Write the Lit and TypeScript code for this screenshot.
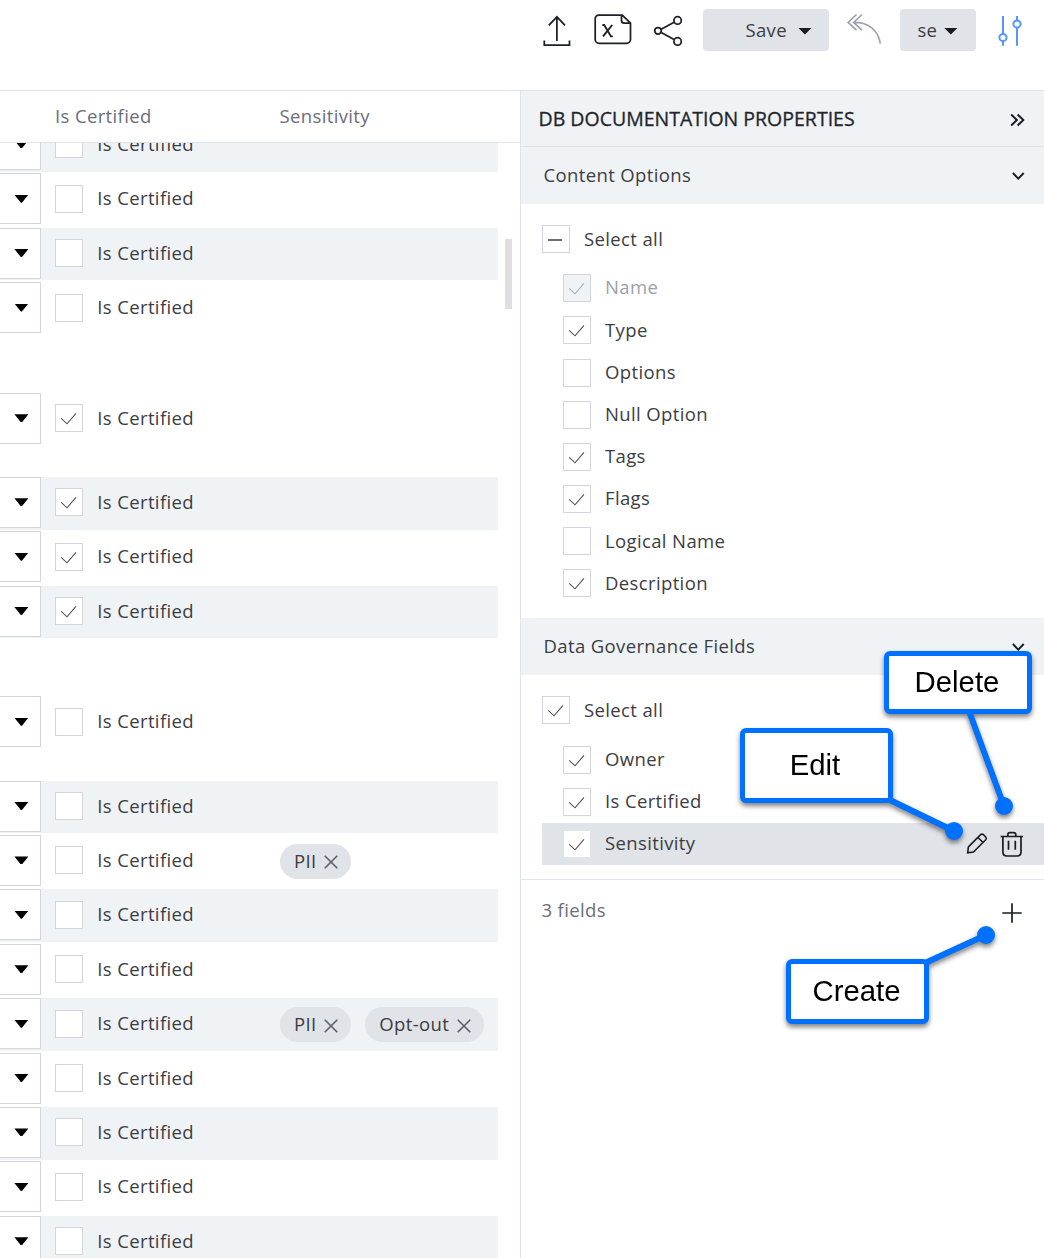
import { LitElement, html, css, svg, nothing } from "lit";
import { customElement, property } from "lit/decorators.js";
import { classMap } from "lit/directives/class-map.js";

type CheckState = "on" | "off" | "mixed";

interface TableRow {
  certified: boolean;
  striped?: boolean;
  tags?: string[];
  /** Extra space under the row, where a group heading sits further left. */
  space?: number;
}

const ROWS: TableRow[] = [
  { certified: false, striped: true },
  { certified: false },
  { certified: false, striped: true },
  { certified: false, space: 56.4 },
  { certified: true, space: 29.5 },
  { certified: true, striped: true },
  { certified: true },
  { certified: true, striped: true, space: 56.2 },
  { certified: false, space: 30 },
  { certified: false, striped: true },
  { certified: false, tags: ["PII"] },
  { certified: false, striped: true },
  { certified: false },
  { certified: false, striped: true, tags: ["PII", "Opt-out"] },
  { certified: false },
  { certified: false, striped: true },
  { certified: false },
  { certified: false, striped: true },
];

interface Option {
  label: string;
  state: CheckState;
  disabled?: boolean;
  active?: boolean;
}

const CONTENT: Option[] = [
  { label: "Name", state: "on", disabled: true },
  { label: "Type", state: "on" },
  { label: "Options", state: "off" },
  { label: "Null Option", state: "off" },
  { label: "Tags", state: "on" },
  { label: "Flags", state: "on" },
  { label: "Logical Name", state: "off" },
  { label: "Description", state: "on" },
];

const GOVERNANCE: Option[] = [
  { label: "Owner", state: "on" },
  { label: "Is Certified", state: "on" },
  { label: "Sensitivity", state: "on", active: true },
];

@customElement("check-box")
class CheckBox extends LitElement {
  @property() state: CheckState = "off";
  @property({ type: Boolean }) disabled = false;
  @property({ type: Boolean }) plain = false;

  static styles = css`
    :host { display: block; flex: none; width: 28px; height: 28px; }
    .box { box-sizing: border-box; width: 28px; height: 28px; border: 1px solid #d3d5db; background: #fff; }
    .disabled { background: #eff3f6; }
    .plain { border-color: #e0e3e8; }
    svg { display: block; width: 26px; height: 26px; fill: none; stroke: #505055; stroke-width: 1.05; }
    .disabled svg { stroke: #a9abb2; }
    .mixed svg { stroke: #6d6d72; stroke-width: 2; }
  `;

  render() {
    const mark =
      this.state === "on" ? svg`<path d="M5.2 13.4L11 18.8L20 8.3" />`
      : this.state === "mixed" ? svg`<path d="M5 14H19" />`
      : nothing;
    return html`<div class=${classMap({ box: true, disabled: this.disabled, plain: this.plain, mixed: this.state === "mixed" })}>
      <svg viewBox="0 0 26 26">${mark}</svg>
    </div>`;
  }
}

@customElement("tool-bar")
class ToolBar extends LitElement {
  static styles = css`
    :host { display: flex; height: 90px; box-sizing: border-box; padding: 9px 0 0 536px; align-items: flex-start; }
    svg { display: block; flex: none; fill: none; stroke: #1f2027; stroke-width: 1.75; }
    .btn { box-sizing: border-box; flex: none; display: flex; align-items: center; height: 42px; border-radius: 4px; background: #e0e3e8; font-size: 18.5px; color: #3c3d43; padding-bottom: 2px; }
    .save { width: 126px; margin-left: 9px; padding-left: 42.4px; }
    .base { width: 76px; margin-left: 12px; padding-left: 17.4px; }
    .caret { width: 14px; height: 7px; margin: 4px 0 0 11px; background: #1b1c22; clip-path: polygon(0 0, 100% 0, 50% 100%); }
    .base .caret { margin-left: 6.5px; }
    .undo { margin-left: 13px; stroke: #9ca0aa; stroke-width: 1.6; }
    .tune { margin-left: 14px; stroke: #5596ff; stroke-width: 2; }
  `;

  render() {
    return html`
      <svg width="46" height="42" viewBox="536 9 46 42"><path d="M556.9 41V17M548.8 25.4L556.9 16.8L565 25.4M544.3 40.6V45H569.5V40.6" /></svg>
      <svg width="62" height="42" viewBox="582 9 62 42">
        <path d="M599 15.1H622.3L630.5 23.2V39.4A4 4 0 0 1 626.5 43.3H599A3.8 3.8 0 0 1 595.2 39.5V18.9A3.8 3.8 0 0 1 599 15.1ZM621.5 15V20.5A2.7 2.7 0 0 0 624.2 23.2H630.5" />
        <path stroke-width="1.9" d="M602.4 25H604.2L611 36.4H612.8M612.2 25L603 36.4" />
      </svg>
      <svg width="50" height="42" viewBox="644 9 50 42">
        <circle cx="658" cy="30.8" r="3.3" /><circle cx="677.6" cy="20.4" r="3.7" /><circle cx="677.6" cy="41.4" r="3.7" />
        <path d="M661.2 29.2L674.1 22.2M661.2 32.5L674.1 39.6" />
      </svg>
      <div class="btn save">Save<span class="caret"></span></div>
      <svg class="undo" width="46" height="42" viewBox="842 9 46 42"><path d="M856.5 14.5L848.2 22.4L856.5 30.2M862 14.5L853.6 22.4L862 30.2M854 22.4C868 22.2 878.5 30 880.3 43.6" /></svg>
      <div class="btn base">se<span class="caret"></span></div>
      <svg class="tune" width="40" height="42" viewBox="990 9 40 42">
        <path d="M1003 16V33.7M1003 41.3V45.8M1017 16V20.2M1017 27.8V45.8" />
        <circle cx="1003" cy="37.5" r="3.6" /><circle cx="1017" cy="24" r="3.6" />
      </svg>
    `;
  }
}

@customElement("field-table")
class FieldTable extends LitElement {
  static styles = css`
    :host { display: flex; flex-direction: column; width: 520px; height: 1168px; box-sizing: border-box; border-top: 1px solid #e0e3e8; }
    .head { flex: none; display: flex; box-sizing: border-box; height: 52px; border-bottom: 1px solid #e0e3e8; padding-left: 55px; line-height: 50px; color: #6b6d7b; }
    .head span { width: 224.5px; }
    .body { flex: 1; min-height: 0; display: flex; overflow: hidden; }
    .rows { flex: none; width: 498px; margin-top: -24.1px; }
    .row { display: flex; box-sizing: border-box; height: 52.75px; margin-bottom: 1.66px; }
    .striped { background: #eff3f6; }
    .drop { box-sizing: border-box; flex: none; width: 41px; height: 51px; border: 1px solid #d3d5db; border-left: 0; background: #fff; padding: 20.4px 0 0 14.4px; }
    .arrow { width: 14px; height: 8px; background: #000; clip-path: polygon(0 0, 100% 0, 54% 100%, 46% 100%); }
    check-box { margin: 11.4px 0 0 14px; }
    .label { flex: none; width: 197px; padding-left: 14.3px; box-sizing: border-box; line-height: 49.4px; color: #3c3d43; }
    .tags { flex: none; display: flex; gap: 14px; padding-top: 8.8px; }
    .tag { display: flex; align-items: center; box-sizing: border-box; height: 35px; border-radius: 18px; background: #e0e3e8; padding: 0 13px 0 14px; gap: 7.7px; color: #3c3d43; }
    .tag span { line-height: 33px; margin-top: -2px; }
    .tag svg { display: block; width: 14px; height: 14px; margin-top: 2px; fill: none; stroke: #5d5f6d; stroke-width: 1.6; }
    .track { flex: none; width: 22px; padding: 96px 0 0 7px; box-sizing: border-box; }
    .thumb { width: 7px; height: 70px; background: #dfdfe1; }
  `;

  render() {
    return html`
      <div class="head"><span>Is Certified</span><span>Sensitivity</span></div>
      <div class="body">
        <div class="rows">
          ${ROWS.map((r) => html`
            <div class=${classMap({ row: true, striped: !!r.striped })}>
              <div class="drop"><div class="arrow"></div></div>
              <check-box .state=${r.certified ? "on" : "off"}></check-box>
              <div class="label">Is Certified</div>
              <div class="tags">
                ${(r.tags ?? []).map((t) => html`<div class="tag"><span>${t}</span><svg viewBox="0 0 14 14"><path d="M.7 .7L13.3 13.3M13.3 .7L.7 13.3" /></svg></div>`)}
              </div>
            </div>
            ${r.space ? html`<div style="height:${r.space}px"></div>` : nothing}
          `)}
        </div>
        <div class="track"><div class="thumb"></div></div>
      </div>
    `;
  }
}

@customElement("properties-panel")
class PropertiesPanel extends LitElement {
  static styles = css`
    :host { display: block; box-sizing: border-box; width: 524px; height: 1168px; border-left: 1px solid #e0e3e8; border-top: 1px solid #e0e3e8; color: #3c3d43; }
    svg { display: block; fill: none; stroke: #1b1c22; stroke-width: 1.7; }
    .title { display: flex; justify-content: space-between; box-sizing: border-box; height: 56px; border-bottom: 1px solid #e0e3e8; background: #eff3f6; padding: 0 19.5px 0 17.5px; line-height: 55px; font-size: 19.5px; font-weight: 500; letter-spacing: 0; -webkit-text-stroke: 0.3px #24252b; color: #24252b; }
    .title svg { margin-top: 22px; stroke-width: 2; }
    .section { display: flex; justify-content: space-between; height: 57px; background: #eff3f6; padding: 0 19.5px 0 22.5px; line-height: 55px; }
    .section svg { margin-top: 23.5px; stroke-width: 1.9; }
    .all { display: flex; align-items: center; height: 28px; padding: 21px 0 0 21px; line-height: 28px; gap: 14px; }
    .list { padding: 14.15px 0 13.9px 21px; }
    .item { display: flex; align-items: center; box-sizing: border-box; height: 42.18px; padding-left: 21px; gap: 14px; line-height: 42px; }
    .all span { margin-top: -1px; }
    .item span { margin-top: -1.5px; }
    .active { background: #e0e3e8; }
    .disabled { color: #9ca0aa; }
    .actions { margin-left: auto; margin-right: 20px; display: flex; gap: 11px; }
    .foot { display: flex; justify-content: space-between; border-top: 1px solid #e0e3e8; padding: 0 22px 0 20.5px; line-height: 59.4px; color: #6b6d7b; }
    .foot svg { margin-top: 23px; }
  `;

  private item(o: Option) {
    return html`<div class=${classMap({ item: true, active: !!o.active, disabled: !!o.disabled })}>
      <check-box .state=${o.state} ?disabled=${o.disabled} ?plain=${o.active}></check-box><span>${o.label}</span>
      ${o.active ? html`<div class="actions">
        <svg width="23" height="26" viewBox="966 831 23 26"><path stroke-width="1.6" d="M967.7 852.8L968.4 846.9L980.6 834.7Q982 833.5 983.4 834.7L985.7 837Q986.9 838.4 985.7 839.8L973.5 852L967.7 852.8ZM978 837.5L983 842.5" /></svg>
        <svg width="24" height="26" viewBox="1000 831 24 26"><path d="M1000.6 836.5H1023M1007.8 836.3V834.8Q1007.8 832.6 1010 832.6H1013.6Q1015.8 832.6 1015.8 834.8V836.3M1002.9 836.8V852Q1002.9 856 1006.9 856H1017Q1021 856 1021 852V836.8M1008.5 840.8V849.8M1015.3 840.8V849.8" /></svg>
      </div>` : nothing}
    </div>`;
  }

  private section(name: string, all: CheckState, options: Option[]) {
    return html`
      <div class="section">${name}<svg width="14" height="10" viewBox="0 0 14 10"><path d="M1.9 2L7.3 7.7L12.7 2" /></svg></div>
      <div class="all"><check-box .state=${all}></check-box><span>Select all</span></div>
      <div class="list">${options.map((o) => this.item(o))}</div>
    `;
  }

  render() {
    return html`
      <div class="title">DB DOCUMENTATION PROPERTIES<svg width="15" height="14" viewBox="0 0 15 14"><path d="M1.2 1.5L6.9 7L1.2 12.5M7.6 1.5L13.3 7L7.6 12.5" /></svg></div>
      ${this.section("Content Options", "mixed", CONTENT)}
      ${this.section("Data Governance Fields", "on", GOVERNANCE)}
      <div class="foot">3 fields<svg width="20" height="20" viewBox="0 0 20 20"><path d="M10 .3V19.7M.3 10H19.7" /></svg></div>
    `;
  }
}

@customElement("app-root")
class AppRoot extends LitElement {
  static styles = css`
    :host { display: block; position: relative; width: 1044px; height: 1258px; overflow: hidden; background: #fff; font: 18.5px "Open Sans", "Noto Sans", sans-serif; font-weight: 390; letter-spacing: 0.37px; }
    .main { display: flex; }
    .notes { position: absolute; inset: 0; filter: drop-shadow(0 3px 2.5px rgba(0, 0, 0, 0.5)); }
    .lines { position: absolute; left: 0; top: 0; stroke: #0070ff; stroke-width: 6; fill: #0070ff; }
    .note { position: absolute; box-sizing: border-box; display: flex; align-items: center; justify-content: center; border: 5px solid #0070ff; border-radius: 6px; background: #fff; color: #000; font: 29.33px "Liberation Sans", Arial, sans-serif; letter-spacing: 0; }
    .delete { left: 884px; top: 651px; width: 148px; height: 63px; padding: 0 2px 1px 0; }
    .edit { left: 740px; top: 728px; width: 153px; height: 75px; padding: 0 3px 1px 0; }
    .create { left: 786px; top: 959px; width: 143px; height: 65px; padding: 0 2px 1px 0; }
  `;

  render() {
    return html`
      <tool-bar></tool-bar>
      <div class="main"><field-table></field-table><properties-panel></properties-panel></div>
      <div class="notes">
        <svg class="lines" width="1044" height="1258" viewBox="0 0 1044 1258">
          <path d="M969 711L1004 806M890 800L954 831M925 963L986 935" />
          <g stroke="none"><circle cx="1004" cy="806" r="9" /><circle cx="954" cy="831" r="9" /><circle cx="986" cy="935" r="9" /></g>
        </svg>
        <div class="note delete">Delete</div>
        <div class="note edit">Edit</div>
        <div class="note create">Create</div>
      </div>
    `;
  }
}
